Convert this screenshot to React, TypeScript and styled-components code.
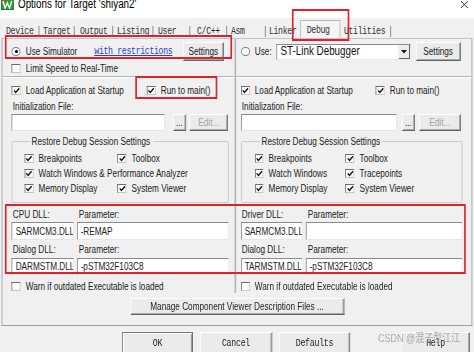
import React from "react";
import styled, { createGlobalStyle } from "styled-components";

// The captured dialog is squeezed horizontally (about 0.82), so the page is
// laid out wider and compressed once at the root. sx() converts a measured
// on-screen width into layout pixels.
const SQUEEZE = 0.82;
const sx = (px: number) => Math.round((px / SQUEEZE) * 100) / 100;

const SANS = `"Liberation Sans", Arial, sans-serif`;
const MONO = `"Liberation Mono", "Courier New", monospace`;

const GlobalStyle = createGlobalStyle`
  * { box-sizing: border-box; }
  html, body { margin: 0; padding: 0; background: #f0f0f0; }
  body { font-family: ${SANS}; }
`;

const Viewport = styled.div`
  width: 474px;
  height: 352px;
  overflow: hidden;
  background: #f0f0f0;
`;

const Dialog = styled.div`
  position: relative;
  width: ${sx(474)}px;
  height: 352px;
  transform: scaleX(${SQUEEZE});
  transform-origin: 0 0;
  background: #f0f0f0;
  font-family: ${SANS};
  font-size: 10px;
  line-height: 11px;
  color: #222;
`;

const TitleBar = styled.div`
  display: flex;
  align-items: flex-start;
  height: 22px;
  margin-top: -4px;
  padding: 0 ${sx(6)}px 0 ${sx(1)}px;
  background: #fff;
`;

const TitleIcon = styled.svg`
  margin-top: 1px;
  flex-shrink: 0;
`;

const TitleText = styled.span`
  margin-left: ${sx(4)}px;
  font-size: 12px;
  line-height: 16px;
  color: #000;
`;

const CloseIcon = styled.svg`
  margin-left: auto;
  margin-top: 5px;
`;

const TabStrip = styled.div`
  display: flex;
  align-items: flex-end;
  height: 20px;
  padding-left: ${sx(2)}px;
`;

const Tab = styled.div<{ $width: number; $pad: number; $hideSep?: boolean }>`
  width: ${(p) => sx(p.$width)}px;
  height: 11px;
  margin-bottom: 1px;
  padding-left: ${(p) => sx(p.$pad)}px;
  border-right: ${sx(1)}px solid ${(p) => (p.$hideSep ? "transparent" : "#7a7a7a")};
  font-family: ${MONO};
  font-size: 10px;
  letter-spacing: -0.4px;
  line-height: 11px;
  color: #333;
  white-space: nowrap;
`;

const ActiveTab = styled(Tab)`
  height: 18px;
  margin-bottom: 0;
  padding-top: 4px;
  border: 1px solid #b8b8b8;
  border-bottom: none;
  background: #f4f4f4;
`;

const Panel = styled.div`
  display: flex;
  flex-direction: column;
  height: 288px;
  margin: 0 ${sx(2)}px;
  border: 1px solid #a0a0a0;
  border-left-width: ${sx(1)}px;
  border-right-width: ${sx(1)}px;
  border-top-color: #c4c4c4;
`;

const Columns = styled.div`
  display: grid;
  grid-template-columns: ${sx(232)}px ${sx(1)}px 1fr;
  height: 254px;
`;

const Divider = styled.div`
  background: #b4b4b4;
`;

const Column = styled.div`
  display: flex;
  flex-direction: column;
  padding-top: 3px;
`;

const Section = styled.div<{ $l: number; $r: number }>`
  display: flex;
  flex-direction: column;
  padding: 0 ${(p) => sx(p.$r)}px 0 ${(p) => sx(p.$l)}px;
`;

const TopRow = styled.div`
  display: flex;
  align-items: center;
  height: 19px;
`;

const CheckRow = styled.div<{ $mt: number; $h?: number }>`
  display: flex;
  align-items: center;
  height: ${(p) => p.$h ?? 11}px;
  margin-top: ${(p) => p.$mt}px;
`;

const Separator = styled.div`
  height: 2px;
  margin-top: 2px;
  border-top: 1px solid #b4b4b4;
  border-bottom: 1px solid #fff;
`;

const Label = styled.div<{ $mt?: number; $pl?: number }>`
  height: 11px;
  margin-top: ${(p) => p.$mt ?? 0}px;
  padding-left: ${(p) => sx(p.$pl ?? 0)}px;
  white-space: nowrap;
`;

const InlineText = styled.span`
  margin-left: ${sx(5)}px;
  white-space: nowrap;
`;

const Link = styled.span`
  margin-left: ${sx(17)}px;
  font-family: ${MONO};
  font-size: 10px;
  letter-spacing: -0.4px;
  color: #2b3fcc;
  text-decoration: underline;
  white-space: nowrap;
`;

const Button = styled.div<{
  $w: number;
  $h: number;
  $ml?: number;
  $mr?: number;
  $push?: boolean;
  $mono?: boolean;
  $disabled?: boolean;
  $default?: boolean;
}>`
  display: flex;
  align-items: center;
  justify-content: center;
  flex-shrink: 0;
  width: ${(p) => sx(p.$w)}px;
  height: ${(p) => p.$h}px;
  margin-left: ${(p) => (p.$push ? "auto" : `${sx(p.$ml ?? 0)}px`)};
  margin-right: ${(p) => sx(p.$mr ?? 0)}px;
  background: #ebebeb;
  border-style: solid;
  border-width: 1px ${sx(1)}px;
  border-color: ${(p) =>
    p.$default ? "#7a7a7a #3c3c3c #3c3c3c #7a7a7a" : "#fff #646464 #646464 #fff"};
  box-shadow: ${(p) =>
    p.$default
      ? `inset ${sx(1)}px 1px 0 #fff, inset -${sx(1)}px -1px 0 #a0a0a0`
      : `inset -${sx(1)}px -1px 0 #a8a8a8`};
  font-family: ${(p) => (p.$mono ? MONO : SANS)};
  font-size: 10px;
  letter-spacing: ${(p) => (p.$mono ? "-0.3px" : "0")};
  color: ${(p) => (p.$disabled ? "#a3a3a3" : "#222")};
  white-space: nowrap;
`;

const Combo = styled.div`
  display: flex;
  align-items: center;
  width: ${sx(134)}px;
  height: 16px;
  margin-left: ${sx(5)}px;
  background: #fff;
  border-style: solid;
  border-width: 1px ${sx(1)}px;
  border-color: #8a8a8a #e6e6e6 #e6e6e6 #8a8a8a;
  font-size: 12px;
  color: #111;
`;

const ComboText = styled.span`
  flex: 1;
  padding-left: ${sx(3)}px;
  white-space: nowrap;
`;

const ComboArrow = styled.div`
  display: flex;
  align-items: center;
  justify-content: center;
  width: ${sx(12)}px;
  height: 14px;
  background: #ebebeb;
  border-left: ${sx(1)}px solid #fff;
  box-shadow: inset -${sx(1)}px -1px 0 #646464;
`;

const FieldRow = styled.div<{ $mt: number; $h: number }>`
  display: flex;
  align-items: center;
  height: ${(p) => p.$h}px;
  margin-top: ${(p) => p.$mt}px;
`;

const TextInput = styled.div<{ $w?: number }>`
  display: flex;
  align-items: center;
  flex: none;
  width: ${(p) => (p.$w ? `${sx(p.$w)}px` : "auto")};
  height: 100%;
  padding-left: ${sx(3)}px;
  background: #fff;
  border-style: solid;
  border-width: 1px ${sx(1)}px;
  border-color: #8a8a8a #e6e6e6 #e6e6e6 #8a8a8a;
  color: #222;
  white-space: nowrap;
  overflow: hidden;
`;

const DllGrid = styled.div<{ $mt: number; $h: number }>`
  display: grid;
  grid-template-columns: ${sx(62)}px 1fr;
  column-gap: ${sx(3)}px;
  height: ${(p) => p.$h}px;
  margin-top: ${(p) => p.$mt}px;
`;

const GroupBox = styled.fieldset<{ $pl: number }>`
  margin: 5px 0 0;
  padding: 4px 0 6px ${(p) => sx(p.$pl)}px;
  border: 1px solid #c8c8c8;
  border-left-width: ${sx(1)}px;
  border-right-width: ${sx(1)}px;
  border-radius: 2px;
  min-width: 0;
`;

const GroupLegend = styled.legend`
  margin-left: ${sx(5)}px;
  padding: 0 ${sx(2)}px;
  line-height: 11px;
  font-size: 10px;
`;

const GroupGrid = styled.div<{ $col: number }>`
  display: grid;
  grid-template-columns: ${(p) => sx(p.$col)}px auto;
  grid-auto-rows: 15px;
  align-items: center;
`;

const CheckItem = styled.div<{ $width?: number; $span?: boolean }>`
  display: flex;
  align-items: center;
  width: ${(p) => (p.$width ? `${sx(p.$width)}px` : "auto")};
  grid-column: ${(p) => (p.$span ? "1 / -1" : "auto")};
  white-space: nowrap;
`;

const CheckBox = styled.div`
  display: flex;
  align-items: center;
  justify-content: center;
  flex-shrink: 0;
  width: ${sx(9)}px;
  height: 9px;
  margin-right: ${sx(5)}px;
  background: #fff;
  border-style: solid;
  border-width: 1px ${sx(1)}px;
  border-color: #6e6e6e #c4c4c4 #c4c4c4 #6e6e6e;
`;

const RadioDot = styled.div<{ $on?: boolean }>`
  display: flex;
  align-items: center;
  justify-content: center;
  flex-shrink: 0;
  width: ${sx(9)}px;
  height: 9px;
  border-radius: 50%;
  background: #fff;
  border: 1px solid #7a7a7a;

  &::after {
    content: "";
    width: ${sx(3)}px;
    height: 3px;
    border-radius: 50%;
    background: ${(p) => (p.$on ? "#111" : "transparent")};
  }
`;

const ManageRow = styled.div`
  display: flex;
  justify-content: center;
  padding-top: 5px;
`;

const BottomRow = styled.div`
  display: flex;
  gap: ${sx(7)}px;
  margin-top: 6px;
  padding: 0 ${sx(4)}px 0 ${sx(122)}px;
`;

const HelpSlot = styled.div`
  margin-left: auto;
`;

const Highlight = styled.div<{ $x: number; $y: number; $w: number; $h: number }>`
  position: absolute;
  left: ${(p) => sx(p.$x)}px;
  top: ${(p) => p.$y}px;
  width: ${(p) => sx(p.$w)}px;
  height: ${(p) => p.$h}px;
  border-style: solid;
  border-color: #d9232e;
  border-width: 2px ${sx(2)}px;
  pointer-events: none;
`;

const Watermark = styled.div`
  position: absolute;
  left: ${sx(378)}px;
  top: 336px;
  font-family: ${SANS}, "Noto Sans CJK SC", sans-serif;
  font-size: 11px;
  line-height: 12px;
  color: rgba(150, 150, 150, 0.8);
  white-space: nowrap;
`;

const Tick = () => (
  <svg width={sx(7)} height="7" viewBox="0 0 7 7" preserveAspectRatio="none">
    <path d="M0.8 3.4 L2.6 5.4 L6.2 1.2" fill="none" stroke="#111" strokeWidth="1.4" />
  </svg>
);

const Check: React.FC<{ label: string; checked?: boolean; width?: number; span?: boolean }> = ({
  label,
  checked,
  width,
  span,
}) => (
  <CheckItem $width={width} $span={span}>
    <CheckBox>{checked && <Tick />}</CheckBox>
    <span>{label}</span>
  </CheckItem>
);

const tabs = [
  { label: "Device", w: 37, pad: 4 },
  { label: "Target", w: 36, pad: 4 },
  { label: "Output", w: 38, pad: 5 },
  { label: "Listing", w: 40, pad: 4 },
  { label: "User", w: 37, pad: 5 },
  { label: "C/C++", w: 37, pad: 7 },
  { label: "Asm", w: 39, pad: 4 },
  { label: "Linker", w: 34, pad: 3 },
  { label: "Debug", w: 40, pad: 6, active: true },
  { label: "Utilities", w: 51, pad: 4 },
];

type Side = {
  left: boolean;
  pl: number;
  pr: number;
  groupPl: number;
  groupCol: number;
  initW: number;
  dotsGap: number;
  editW: number;
  dll1Label: string;
  dll1: string;
  param1: string;
  dll2: string;
  param2: string;
};

const sides: Side[] = [
  {
    left: true,
    pl: 9,
    pr: 6,
    groupPl: 12,
    groupCol: 93,
    initW: 153,
    dotsGap: 8,
    editW: 38,
    dll1Label: "CPU DLL:",
    dll1: "SARMCM3.DLL",
    param1: "-REMAP",
    dll2: "DARMSTM.DLL",
    param2: "-pSTM32F103C8",
  },
  {
    left: false,
    pl: 5,
    pr: 9,
    groupPl: 13,
    groupCol: 91,
    initW: 156,
    dotsGap: 5,
    editW: 42,
    dll1Label: "Driver DLL:",
    dll1: "SARMCM3.DLL",
    param1: "",
    dll2: "TARMSTM.DLL",
    param2: "-pSTM32F103C8",
  },
];

const DebugColumn: React.FC<{ side: Side }> = ({ side }) => (
  <Column>
    <Section $l={side.pl} $r={side.pr}>
      {side.left ? (
        <TopRow>
          <RadioDot $on />
          <InlineText>Use Simulator</InlineText>
          <Link>with restrictions</Link>
          <Button $w={41} $h={19} $push $mr={5}>
            Settings
          </Button>
        </TopRow>
      ) : (
        <TopRow>
          <RadioDot />
          <InlineText>Use:</InlineText>
          <Combo>
            <ComboText>ST-Link Debugger</ComboText>
            <ComboArrow>
              <svg width={sx(6)} height="4" viewBox="0 0 6 4" preserveAspectRatio="none">
                <path d="M0 0 H6 L3 3.5 Z" fill="#111" />
              </svg>
            </ComboArrow>
          </Combo>
          <Button $w={45} $h={19} $ml={5}>
            Settings
          </Button>
        </TopRow>
      )}
      <CheckRow $mt={1} $h={12}>
        {side.left && <Check label="Limit Speed to Real-Time" />}
      </CheckRow>
    </Section>
    <Separator />
    <Section $l={side.pl} $r={side.pr}>
      <CheckRow $mt={7}>
        <Check label="Load Application at Startup" checked width={135} />
        <Check label="Run to main()" checked />
      </CheckRow>
      <Label $mt={5} $pl={1}>
        Initialization File:
      </Label>
      <FieldRow $mt={2} $h={17}>
        <TextInput $w={side.initW} />
        <Button $w={13} $h={17} $ml={side.dotsGap}>
          ...
        </Button>
        <Button $w={side.editW} $h={17} $ml={4} $disabled>
          Edit...
        </Button>
      </FieldRow>
      <GroupBox $pl={side.groupPl}>
        <GroupLegend>Restore Debug Session Settings</GroupLegend>
        <GroupGrid $col={side.groupCol}>
          <Check label="Breakpoints" checked />
          <Check label="Toolbox" checked />
          {side.left ? (
            <Check label="Watch Windows & Performance Analyzer" checked span />
          ) : (
            <>
              <Check label="Watch Windows" checked />
              <Check label="Tracepoints" checked />
            </>
          )}
          <Check label="Memory Display" checked />
          <Check label="System Viewer" checked />
        </GroupGrid>
      </GroupBox>
      <DllGrid $mt={6} $h={11}>
        <Label $pl={1}>{side.dll1Label}</Label>
        <Label $pl={2}>Parameter:</Label>
      </DllGrid>
      <DllGrid $mt={2} $h={18}>
        <TextInput>{side.dll1}</TextInput>
        <TextInput>{side.param1}</TextInput>
      </DllGrid>
      <DllGrid $mt={4} $h={11}>
        <Label $pl={1}>Dialog DLL:</Label>
        <Label $pl={2}>Parameter:</Label>
      </DllGrid>
      <DllGrid $mt={3} $h={17}>
        <TextInput>{side.dll2}</TextInput>
        <TextInput>{side.param2}</TextInput>
      </DllGrid>
      <CheckRow $mt={6}>
        <Check label="Warn if outdated Executable is loaded" />
      </CheckRow>
    </Section>
  </Column>
);

const App: React.FC = () => {
  const activeIndex = tabs.findIndex((t) => t.active);
  return (
    <Viewport>
      <GlobalStyle />
      <Dialog>
        <TitleBar>
          <TitleIcon width={sx(13)} height="13" viewBox="0 0 13 13" preserveAspectRatio="none">
            <rect x="0.5" y="0.5" width="12" height="12" fill="#2f9b3f" stroke="#1c6a28" />
            <rect x="1" y="1" width="4" height="3" fill="#d8342c" />
            <path d="M2 4 L4.3 11 L6.5 6 L8.7 11 L11 4" fill="none" stroke="#fff" strokeWidth="1.4" />
          </TitleIcon>
          <TitleText>Options for Target 'shiyan2'</TitleText>
          <CloseIcon width={sx(7)} height="7" viewBox="0 0 7 7" preserveAspectRatio="none">
            <path d="M0 0 L7 7 M7 0 L0 7" stroke="#333" strokeWidth="1" />
          </CloseIcon>
        </TitleBar>
        <TabStrip>
          {tabs.map((t, i) =>
            t.active ? (
              <ActiveTab key={t.label} $width={t.w} $pad={t.pad}>
                {t.label}
              </ActiveTab>
            ) : (
              <Tab key={t.label} $width={t.w} $pad={t.pad} $hideSep={i === activeIndex - 1}>
                {t.label}
              </Tab>
            )
          )}
        </TabStrip>
        <Panel>
          <Columns>
            <DebugColumn side={sides[0]} />
            <Divider />
            <DebugColumn side={sides[1]} />
          </Columns>
          <ManageRow>
            <Button $w={214} $h={17}>
              Manage Component Viewer Description Files ...
            </Button>
          </ManageRow>
        </Panel>
        <BottomRow>
          <Button $w={71} $h={22} $mono $default>
            OK
          </Button>
          <Button $w={72} $h={22} $mono>
            Cancel
          </Button>
          <Button $w={71} $h={22} $mono>
            Defaults
          </Button>
          <HelpSlot>
            <Button $w={69} $h={22} $mono>
              Help
            </Button>
          </HelpSlot>
        </BottomRow>
        <Highlight $x={5} $y={39} $w={227} $h={24} />
        <Highlight $x={292} $y={13} $w={57} $h={32} />
        <Highlight $x={135} $y={80} $w={82} $h={23} />
        <Highlight $x={5} $y={208} $w={461} $h={70} />
        <Watermark>CSDN @混子型江江</Watermark>
      </Dialog>
    </Viewport>
  );
};

export default App;
